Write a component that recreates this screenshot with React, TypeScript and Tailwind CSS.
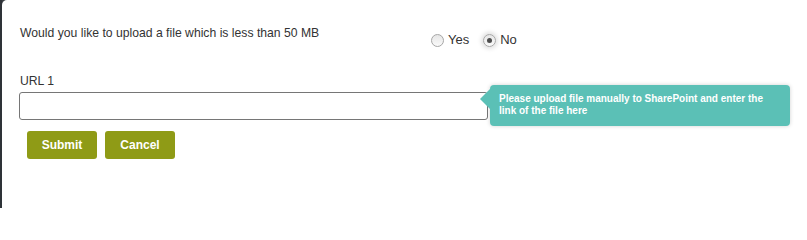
import React from 'react'

function Radio({ checked, label }: { checked?: boolean; label: string }) {
  return (
    <label className="flex items-center gap-[4px]">
      <span
        className={
          'relative flex h-[13px] w-[13px] items-center justify-center rounded-full border border-[#a6a6a6] bg-gradient-to-b from-[#e6e6e6] to-[#fafafa] ' +
          (checked ? 'shadow-[0_0_4px_2px_rgba(0,0,0,0.12)]' : '')
        }
      >
        {checked && <span className="h-[5px] w-[5px] rounded-full bg-[#4d4d4d]" />}
      </span>
      <span className="text-[13px] leading-[16px] text-[#333]">{label}</span>
    </label>
  )
}

export default function App() {
  return (
    <div className="flex h-[208px] w-[807px] bg-[#3a3f44] font-['Liberation_Sans',Arial,sans-serif]">
      <div className="w-[2px] shrink-0 bg-[#2e3338]" />
      <div className="flex-1 rounded-tl-[5px] bg-white pl-[17px] pt-[26px]">
        <div className="flex h-[15px] items-start">
          <p className="w-[412px] pl-px text-[12.2px] leading-[15px] text-[#333]">
            Would you like to upload a file which is less than 50 MB
          </p>
          <div className="mt-[6px] flex items-center gap-[14px]">
            <Radio label="Yes" />
            <Radio checked label="No" />
          </div>
        </div>

        <p className="mt-[33px] pl-px text-[12.2px] leading-[15px] text-[#333]">URL 1</p>

        <div className="mt-[3px] flex h-[28px] items-start">
          <input
            type="text"
            className="h-[28px] w-[469px] rounded-[3px] border border-[#767676] bg-white px-2 text-[13px] outline-none"
          />
          <div className="relative ml-[2px] -mt-[7px] h-[41px] w-[300px] shrink-0 rounded-[4px] bg-[#5bc0b6] pl-[9px] pt-[8px] shadow-[0_0_4px_rgba(0,0,0,0.18)]">
            <span className="absolute -left-[10px] top-[4px] h-0 w-0 border-y-[10px] border-r-[10px] border-y-transparent border-r-[#5bc0b6]" />
            <p className="max-w-[272px] text-[10px] font-bold leading-[12px] text-white">
              Please upload file manually to SharePoint and enter the link of the file here
            </p>
          </div>
        </div>

        <div className="ml-[8px] mt-[11px] flex gap-[8px]">
          <button className="h-[28px] w-[70px] rounded-[3px] bg-[#8f9b16] text-[12px] font-bold text-white">
            Submit
          </button>
          <button className="h-[28px] w-[70px] rounded-[3px] bg-[#8f9b16] text-[12px] font-bold text-white">
            Cancel
          </button>
        </div>
      </div>
    </div>
  )
}
